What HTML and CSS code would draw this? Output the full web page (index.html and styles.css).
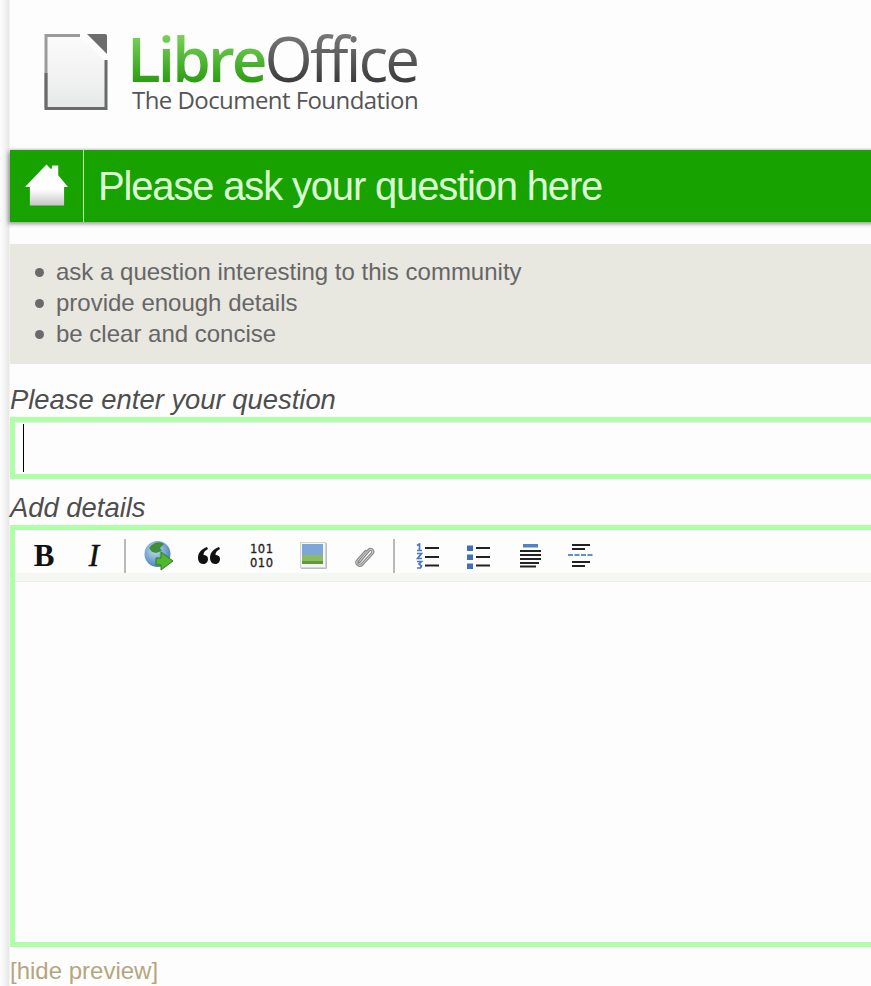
FILE: index.html
```html
<!DOCTYPE html>
<html lang="en">
<head>
<meta charset="utf-8">
<title>Please ask your question here</title>
<link rel="stylesheet" href="styles.css">
</head>
<body>
<div class="page">
  <header class="logo-row">
    <svg class="doc-icon" width="64" height="78" viewBox="0 0 64 78">
      <defs><linearGradient id="docfill" x1="0" y1="0" x2="0" y2="1"><stop offset="0" stop-color="#fbfbfb"/><stop offset="0.6" stop-color="#f1f1f1"/><stop offset="1" stop-color="#e6e8e8"/></linearGradient></defs>
      <path d="M2 3H36L62 29V75H2Z" fill="url(#docfill)"/>
      <path d="M36 2.500H2V75" fill="none" stroke="#9b9b9b" stroke-width="3"/>
      <path d="M2 40V75.500H62V27" fill="none" stroke="#6a6a6a" stroke-width="3"/>
      <path d="M43 1H61Q63 1 63 3V21Z" fill="#6d6d6d"/>
    </svg>
    <div class="wordmark">
      <div class="wordmark-main"><span class="libre">Libre</span><span class="office">Office</span></div>
      <div class="wordmark-sub">The Document Foundation</div>
    </div>
  </header>
  <div class="title-bar">
    <a class="home-cell">
      <svg width="43" height="44" viewBox="0 0 44 44">
        <defs><linearGradient id="homefill" x1="0" y1="0" x2="0" y2="1"><stop offset="0.6" stop-color="#ffffff"/><stop offset="1" stop-color="#c6c6c6"/></linearGradient></defs>
        <path d="M0 23L22 0L27 5L28 1H34V11L44 23H40V42H5V23Z" fill="url(#homefill)"/>
      </svg>
    </a>
    <h1 class="title">Please ask your question here</h1>
  </div>
  <ul class="tips">
    <li>ask a question interesting to this community</li>
    <li>provide enough details</li>
    <li>be clear and concise</li>
  </ul>
  <label class="field-label">Please enter your question</label>
  <div class="title-input"><span class="caret"></span></div>
  <label class="field-label details-label">Add details</label>
  <div class="editor">
    <div class="toolbar">
      <span class="tool tool-b">B</span>
      <span class="tool tool-i">I</span>
      <span class="sep"></span>
      <svg class="tool-icon globe" width="30" height="30" viewBox="0 0 30 30">
        <defs><radialGradient id="gl" cx="0.4" cy="0.35" r="0.7"><stop offset="0" stop-color="#c4dcf0"/><stop offset="1" stop-color="#3f7db8"/></radialGradient></defs>
        <circle cx="13.500" cy="13" r="13" fill="url(#gl)"/>
        <path d="M5 7C9 1 16 0 20 3L16 7L18 10L12 12L8 11Z" fill="#3f8f3a"/>
        <path d="M12 17H17V11L29 20L17 29V24H12Z" fill="#4fb62e" stroke="#2f7f1e"/>
      </svg>
      <svg class="tool-icon quote" width="24" height="20" viewBox="0 0 24 20">
        <path d="M10 1C5 3 1 6 1 12C1 15 3 18 6 18C9 18 11 16 11 13C11 10 9 9 6.500 9C6.500 6 8 4.500 11 3Z" fill="#111"/>
        <path d="M22 1C17 3 13 6 13 12C13 15 15 18 18 18C21 18 23 16 23 13C23 10 21 9 18.500 9C18.500 6 20 4.500 23 3Z" fill="#111"/>
      </svg>
      <span class="tool-code">101<br>010</span>
      <svg class="tool-icon picture" width="27" height="27" viewBox="0 0 27 27">
        <rect x="0.500" y="0.500" width="25" height="25" fill="#f6f6f6" stroke="#d4d4d4"/>
        <rect x="2" y="2" width="21" height="11" fill="#7fa6d8"/>
        <rect x="2" y="13" width="21" height="6" fill="#8dbb62"/>
        <rect x="2" y="19" width="21" height="3" fill="#5f9a3e"/>
        <path d="M1 26.500H26.500V1" fill="none" stroke="#bdbdbd"/>
      </svg>
      <svg class="tool-icon clip" width="22" height="24" viewBox="0 0 24 26">
        <path d="M7 19L17 7C19 4 23 7 21 10L10 22C7 25 2 21 5 18L14 8" fill="none" stroke="#8c8c8c" stroke-width="3.500" stroke-linecap="round"/>
        <path d="M7 19L17 7C19 4 23 7 21 10L10 22C7 25 2 21 5 18L14 8" fill="none" stroke="#dcdcdc" stroke-width="1"/>
      </svg>
      <span class="sep sep-2"></span>
      <svg class="tool-icon ol" width="24" height="26" viewBox="0 0 24 26">
        <g fill="none" stroke="#4a76c0" stroke-width="1.700"><path d="M1 2.500L3.500 1V7.500M1 7.500H6"/><path d="M1 10.500H5.500L1.500 15.500H6"/><path d="M1 18.500H5.500L3 21L5.500 23L4.500 25H1"/></g>
        <g stroke="#222" stroke-width="2"><path d="M9 5H23M9 14H23M9 22.500H23"/></g>
      </svg>
      <svg class="tool-icon ul" width="24" height="26" viewBox="0 0 24 26">
        <g fill="#3f70b8"><rect x="0" y="2.500" width="6" height="5.500"/><rect x="0" y="11.500" width="6" height="5.500"/><rect x="0" y="20.500" width="6" height="5.500"/></g>
        <g stroke="#222" stroke-width="2"><path d="M9 5H23M9 14H23M9 22.500H23"/></g>
      </svg>
      <svg class="tool-icon heading" width="24" height="26" viewBox="0 0 24 26">
        <rect x="3" y="1" width="15" height="3.500" fill="#5082cc"/>
        <g stroke="#222" stroke-width="2"><path d="M0 8H21M0 12H21M0 16H21M0 20H19M0 23.500H16"/></g>
      </svg>
      <svg class="tool-icon hr" width="27" height="26" viewBox="0 0 27 26">
        <g stroke="#222" stroke-width="2"><path d="M4 2H22M4 6H17M4 19H22M4 23H17"/></g>
        <path d="M0 12H26" stroke="#5a8fd8" stroke-width="2" stroke-dasharray="5 1.500"/>
      </svg>
    </div>
  </div>
  <a class="preview-toggle">[hide preview]</a>
</div>
</body>
</html>
```

FILE: styles.css
```css
html, body {
  margin: 0;
  padding: 0;
  height: 100%;
  overflow: hidden;
}

body {
  background: #fdfdfd;
  font-family: "Liberation Sans", Arial, sans-serif;
  color: #4c4c4c;
}

.page {
  width: 900px;
  height: 986px;
  padding-left: 10px;
  box-sizing: border-box;
  background: linear-gradient(to right, #fdfdfd 0, #f2f3f2 5px, #e6e7e6 9px, #fdfdfd 10px);
  background-size: 10px 100%;
  background-repeat: no-repeat;
  overflow: hidden;
}

.logo-row {
  height: 150px;
  box-sizing: border-box;
  display: flex;
  align-items: flex-start;
  padding: 33px 0 0 34px;
  gap: 20px;
}

.doc-icon {
  flex: none;
}

.wordmark {
  margin-top: -6px;
  width: 295px;
  margin-left: -1px;
}

.wordmark-main {
  font-family: "Open Sans", sans-serif;
  font-size: 62px;
  line-height: 62px;
  letter-spacing: -2.900px;
  white-space: nowrap;
}

.libre {
  font-weight: 600;
  background: linear-gradient(to bottom, #7cd45e 20%, #2a9c10 80%);
  -webkit-background-clip: text;
  background-clip: text;
  color: transparent;
}

.office {
  font-weight: 400;
  background: linear-gradient(to bottom, #7a7a7a 20%, #3a3a3a 80%);
  -webkit-background-clip: text;
  background-clip: text;
  color: transparent;
}

.wordmark-sub {
  font-family: "Open Sans", sans-serif;
  font-size: 24px;
  line-height: 28px;
  color: #555;
  margin: -3px 0 0 5px;
  letter-spacing: -0.560px;
  white-space: nowrap;
}

.title-bar {
  height: 72px;
  background: #17a200;
  display: flex;
  align-items: stretch;
  box-shadow: -2px 2px 4px #9a9a9a, 0 -1px 2px #cfcfcf;
}

.home-cell {
  flex: none;
  width: 74px;
  box-sizing: border-box;
  border-right: 1px solid #bdf2ad;
  display: flex;
  align-items: center;
  justify-content: center;
}

.title {
  margin: 0;
  padding-left: 14px;
  font-size: 40px;
  font-weight: 400;
  line-height: 72px;
  letter-spacing: -1.170px;
  color: #d9ffd3;
  white-space: nowrap;
}

.tips {
  list-style: none;
  margin: 22px 0 0;
  padding: 12px 0 14px 46px;
  height: 120px;
  box-sizing: border-box;
  background: #e8e7e0;
  font-size: 24px;
  line-height: 31px;
  color: #666;
}

.tips li {
  position: relative;
}

.tips li::before {
  content: "";
  position: absolute;
  left: -21px;
  top: 12px;
  width: 9px;
  height: 9px;
  border-radius: 50%;
  background: #6a6a6a;
}

.field-label {
  display: block;
  font-size: 27.400px;
  font-style: italic;
  line-height: 30px;
  color: #4e4e4e;
}

.tips + .field-label {
  margin-top: 21px;
}

.title-input {
  height: 62px;
  box-sizing: border-box;
  border: 5px solid #aeffa6;
  background: #fdfdfd;
  box-shadow: inset 0 1px 0 #ececec;
  margin-top: 2px;
  padding: 2px 0 0 8px;
}

.caret {
  display: block;
  width: 1px;
  height: 48px;
  background: #000;
}

.details-label {
  margin-top: 14px;
}

.editor {
  height: 422px;
  box-sizing: border-box;
  border: 5px solid #aeffa6;
  margin-top: 2px;
  background: #fdfdfd;
}

.toolbar {
  height: 52px;
  box-sizing: border-box;
  display: flex;
  align-items: center;
  border-bottom: 1px solid #ececec;
  background: linear-gradient(to bottom, #fdfdfd 43px, #f5f7f3 43px);
  padding-left: 18px;
}

.tool {
  font-family: "Liberation Serif", serif;
  font-size: 31px;
  line-height: 30px;
  color: #111;
  display: block;
  width: 22px;
  text-align: center;
}

.tool-b {
  font-weight: 700;
}

.tool-i {
  font-style: italic;
  font-weight: 400;
  margin-left: 28px;
  -webkit-text-stroke: 0.500px #111;
}

.sep {
  width: 2px;
  height: 34px;
  background: #b9b9b9;
  margin: 0 18px 0 19px;
  flex: none;
}

.sep-2 {
  margin: 0 21px 0 18px;
}

.tool-icon {
  flex: none;
  display: block;
}

.quote {
  margin-left: 23px;
}

.tool-code {
  font-family: "DejaVu Sans", sans-serif;
  font-size: 11.500px;
  line-height: 14px;
  color: #222;
  margin-left: 29px;
  width: 24px;
  letter-spacing: 0.500px;
  -webkit-text-stroke: 0.300px #222;
}

.picture {
  margin-left: 26px;
}

.clip {
  margin-left: 26px;
}

.ul {
  margin-left: 27px;
}

.heading {
  margin-left: 29px;
}

.hr {
  margin-left: 24px;
}

.preview-toggle {
  display: block;
  margin-top: 10px;
  font-size: 24px;
  line-height: 28px;
  color: #b5a67e;
}
```
